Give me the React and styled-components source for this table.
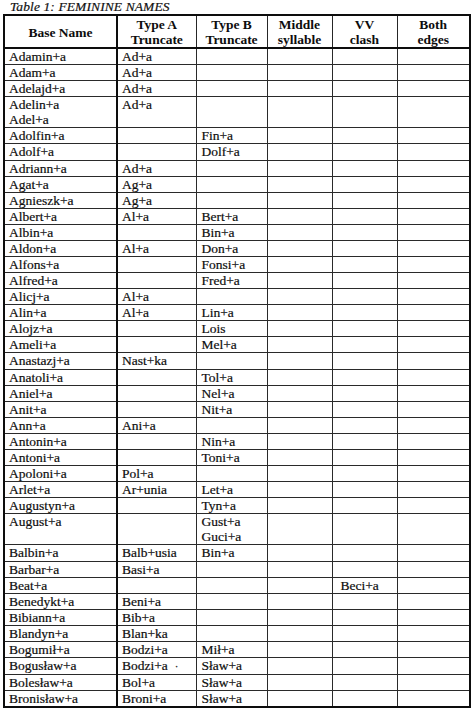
import React from 'react';
import styled, { createGlobalStyle } from 'styled-components';

const serif = '"Liberation Serif", "Times New Roman", serif';

const GlobalStyle = createGlobalStyle`
  html, body {
    margin: 0;
    padding: 0;
    background: #fff;
  }
  body {
    font-family: ${serif};
    color: #111;
  }
`;

const Page = styled.div`
  width: 474px;
  height: 713px;
  overflow: hidden;
  padding-left: 3px;
  box-sizing: border-box;
`;

const Caption = styled.div`
  font-family: ${serif};
  font-style: italic;
  font-size: 13.5px;
  line-height: 13px;
  height: 14px;
  padding-left: 7px;
  letter-spacing: 0.1px;
  -webkit-text-stroke: 0.2px #111;
`;

const Table = styled.table`
  width: 466px;
  border-collapse: collapse;
  table-layout: fixed;
  border: 2px solid #0d0d0d;
  font-family: ${serif};
  color: #0d0d0d;
`;

const Col = styled.col`
  width: ${p => p.$w}px;
`;

const Head = styled.th`
  font-family: ${serif};
  font-size: 13.5px;
  font-weight: bold;
  line-height: 15px;
  padding: 1px 2px 0;
  text-align: center;
  vertical-align: middle;
  border-bottom: 2px solid #0d0d0d;
  border-left: ${p => (p.$thick ? '2px solid #0d0d0d' : '1px solid #262626')};
`;

const Cell = styled.td`
  font-family: ${serif};
  font-size: 13.5px;
  line-height: 15.08px;
  padding: 0 2px 0 ${p => p.$pad}px;
  vertical-align: top;
  white-space: nowrap;
  overflow: hidden;
  -webkit-text-stroke: 0.2px #0d0d0d;
  border: 1px solid #2a2a2a;
  border-left: ${p => (p.$thick ? '2px solid #0d0d0d' : '1px solid #2a2a2a')};
`;

const Line = styled.div``;

const Dot = styled.span`
  margin-left: 7px;
  font-size: 11px;
`;

const columns = [
  { w: 113, pad: 4, label: ['Base Name'] },
  { w: 79, pad: 4, label: ['Type A', 'Truncate'] },
  { w: 71, pad: 5, label: ['Type B', 'Truncate'] },
  { w: 65, pad: 5, label: ['Middle', 'syllable'] },
  { w: 65, pad: 8, label: ['VV', 'clash'] },
  { w: 73, pad: 5, label: ['Both', 'edges'] },
];

const rows = [
  ['Adamin+a', 'Ad+a'],
  ['Adam+a', 'Ad+a'],
  ['Adelajd+a', 'Ad+a'],
  [['Adelin+a', 'Adel+a'], 'Ad+a'],
  ['Adolfin+a', '', 'Fin+a'],
  ['Adolf+a', '', 'Dolf+a'],
  ['Adriann+a', 'Ad+a'],
  ['Agat+a', 'Ag+a'],
  ['Agnieszk+a', 'Ag+a'],
  ['Albert+a', 'Al+a', 'Bert+a'],
  ['Albin+a', '', 'Bin+a'],
  ['Aldon+a', 'Al+a', 'Don+a'],
  ['Alfons+a', '', 'Fonsi+a'],
  ['Alfred+a', '', 'Fred+a'],
  ['Alicj+a', 'Al+a'],
  ['Alin+a', 'Al+a', 'Lin+a'],
  ['Alojz+a', '', 'Lois'],
  ['Ameli+a', '', 'Mel+a'],
  ['Anastazj+a', 'Nast+ka'],
  ['Anatoli+a', '', 'Tol+a'],
  ['Aniel+a', '', 'Nel+a'],
  ['Anit+a', '', 'Nit+a'],
  ['Ann+a', 'Ani+a'],
  ['Antonin+a', '', 'Nin+a'],
  ['Antoni+a', '', 'Toni+a'],
  ['Apoloni+a', 'Pol+a'],
  ['Arlet+a', 'Ar+unia', 'Let+a'],
  ['Augustyn+a', '', 'Tyn+a'],
  ['August+a', '', ['Gust+a', 'Guci+a']],
  ['Balbin+a', 'Balb+usia', 'Bin+a'],
  ['Barbar+a', 'Basi+a'],
  ['Beat+a', '', '', '', 'Beci+a'],
  ['Benedykt+a', 'Beni+a'],
  ['Bibiann+a', 'Bib+a'],
  ['Blandyn+a', 'Blan+ka'],
  ['Bogumił+a', 'Bodzi+a', 'Mił+a'],
  ['Bogusław+a', 'Bodzi+a·', 'Sław+a'],
  ['Bolesław+a', 'Bol+a', 'Sław+a'],
  ['Bronisław+a', 'Broni+a', 'Sław+a'],
];

function CellText({ value }) {
  if (Array.isArray(value)) {
    return value.map(v => <Line key={v}>{v}</Line>);
  }
  if (value.endsWith('·')) {
    return (
      <>
        {value.slice(0, -1)}
        <Dot>·</Dot>
      </>
    );
  }
  return value;
}

export default function App() {
  return (
    <Page>
      <GlobalStyle />
      <Caption>Table 1: FEMININE NAMES</Caption>
      <Table>
        <colgroup>
          {columns.map((c, i) => (
            <Col key={i} $w={c.w} />
          ))}
        </colgroup>
        <thead>
          <tr>
            {columns.map((c, i) => (
              <Head key={i} $thick={i === 1}>
                {c.label.map(l => (
                  <Line key={l}>{l}</Line>
                ))}
              </Head>
            ))}
          </tr>
        </thead>
        <tbody>
          {rows.map((r, ri) => (
            <tr key={ri}>
              {columns.map((c, ci) => (
                <Cell key={ci} $thick={ci === 1} $pad={c.pad}>
                  <CellText value={r[ci] || ''} />
                </Cell>
              ))}
            </tr>
          ))}
        </tbody>
      </Table>
    </Page>
  );
}
